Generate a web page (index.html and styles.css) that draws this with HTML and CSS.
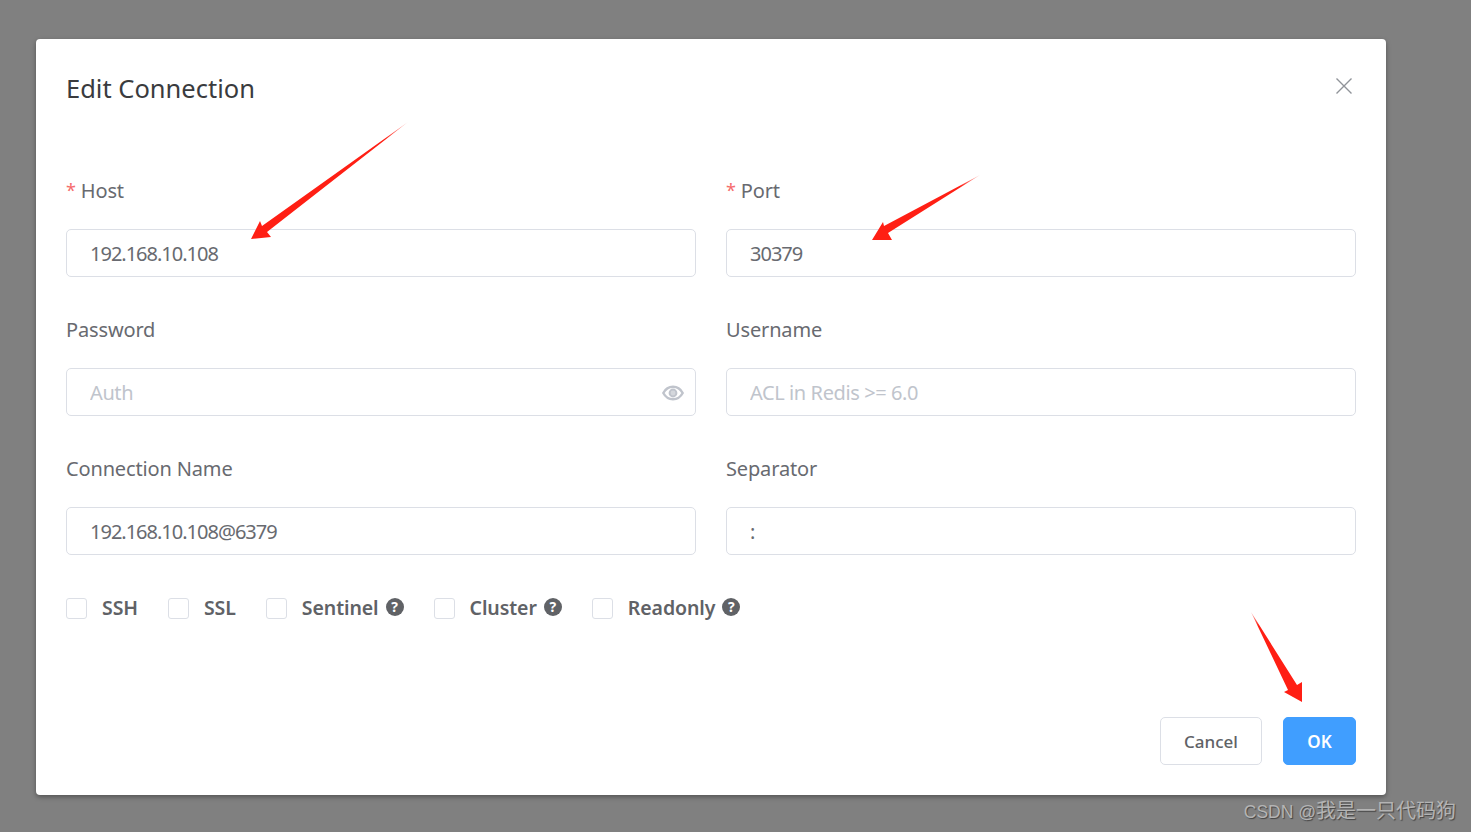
FILE: index.html
```html
<!DOCTYPE html>
<html lang="en">
<head>
<meta charset="utf-8">
<title>Edit Connection</title>
<link rel="stylesheet" href="styles.css">
</head>
<body>
<div class="dialog">
  <header class="dialog-header">
    <h2 class="dialog-title">Edit Connection</h2>
    <button class="close" aria-label="Close">
      <svg width="18" height="18" viewBox="0 0 18 18"><path d="M1.500 1.500L16.500 16.500M16.500 1.500L1.500 16.500" stroke="#909399" stroke-width="1.400" fill="none"/></svg>
    </button>
  </header>
  <form class="form">
    <div class="field">
      <label class="label"><span class="req">*</span>Host</label>
      <input class="input" value="192.168.10.108">
    </div>
    <div class="field">
      <label class="label"><span class="req">*</span>Port</label>
      <input class="input" value="30379">
    </div>
    <div class="field">
      <label class="label">Password</label>
      <div class="input-wrap">
        <input class="input" placeholder="Auth">
        <svg class="eye" width="22" height="16" viewBox="0 0 22 16"><path d="M11 1.800C6.800 1.800 3.200 4.400 1.300 8c1.900 3.600 5.500 6.200 9.700 6.200s7.800-2.600 9.700-6.200C18.800 4.400 15.200 1.800 11 1.800z" fill="none" stroke="#c0c4cc" stroke-width="2.400"/><circle cx="11" cy="8" r="3.400" fill="#d4d7dc" stroke="#c0c4cc" stroke-width="2"/></svg>
      </div>
    </div>
    <div class="field">
      <label class="label">Username</label>
      <input class="input" placeholder="ACL in Redis &gt;= 6.0">
    </div>
    <div class="field">
      <label class="label">Connection Name</label>
      <input class="input" value="192.168.10.108@6379">
    </div>
    <div class="field">
      <label class="label">Separator</label>
      <input class="input" value=":">
    </div>
  </form>
  <div class="checks">
    <label class="check"><span class="box"></span><span class="check-text">SSH</span></label>
    <label class="check"><span class="box"></span><span class="check-text">SSL</span></label>
    <label class="check"><span class="box"></span><span class="check-text">Sentinel</span><span class="help">?</span></label>
    <label class="check"><span class="box"></span><span class="check-text">Cluster</span><span class="help">?</span></label>
    <label class="check"><span class="box"></span><span class="check-text">Readonly</span><span class="help">?</span></label>
  </div>
  <footer class="footer">
    <button class="btn btn-cancel" type="button">Cancel</button>
    <button class="btn btn-ok" type="button">OK</button>
  </footer>
</div>
<svg class="arrows" width="1471" height="832" viewBox="0 0 1471 832">
  <defs>
    <linearGradient id="fadeA" gradientUnits="userSpaceOnUse" x1="408" y1="122" x2="385" y2="139"><stop offset="0" stop-color="#ff1f14" stop-opacity=".3"/><stop offset="1" stop-color="#ff1f14"/></linearGradient>
    <linearGradient id="fadeB" gradientUnits="userSpaceOnUse" x1="980" y1="175" x2="960" y2="187"><stop offset="0" stop-color="#ff1f14" stop-opacity=".3"/><stop offset="1" stop-color="#ff1f14"/></linearGradient>
    <linearGradient id="fadeC" gradientUnits="userSpaceOnUse" x1="1251" y1="612" x2="1258" y2="626"><stop offset="0" stop-color="#ff1f14" stop-opacity=".3"/><stop offset="1" stop-color="#ff1f14"/></linearGradient>
  </defs>
  <polygon fill="url(#fadeA)" points="408,122 262,226 260,221 251,239 271,237 267,232"/>
  <polygon fill="url(#fadeB)" points="980,175 884,226 883,222 872,240 892,240 888,233"/>
  <polygon fill="url(#fadeC)" points="1251,612 1288,690 1284,692 1302,702 1302,682 1297,685"/>
</svg>
<div class="watermark">CSDN @<span class="watermark-cjk">我是一只代码狗</span></div>
</body>
</html>
```
FILE: styles.css
```css
* { box-sizing: border-box; }
html, body { margin: 0; height: 100%; }
body {
  background: #808080;
  font-family: "Noto Sans", "Noto Sans CJK SC", sans-serif;
  color: #606266;
  padding: 39px 0 0 36px;
  overflow: hidden;
}
.dialog {
  width: 1350px;
  height: 756px;
  background: #fff;
  border-radius: 4px;
  box-shadow: 0 2px 5px rgba(0, 0, 0, .35);
  padding: 30px;
  display: flex;
  flex-direction: column;
}
.dialog-header {
  display: flex;
  justify-content: space-between;
  align-items: flex-start;
  height: 100px;
}
.dialog-title {
  margin: 0;
  font-size: 25.500px;
  line-height: 38px;
  font-weight: 400;
  color: #3a3b3e;
}
.close {
  border: 0;
  background: none;
  padding: 0;
  margin: 8px 3px 0 0;
  width: 18px;
  height: 18px;
  line-height: 0;
}
.form {
  display: grid;
  grid-template-columns: 630px 630px;
  column-gap: 30px;
  row-gap: 31px;
}
.field { display: flex; flex-direction: column; }
.label {
  font-size: 20px;
  line-height: 43px;
  height: 60px;
  letter-spacing: -.15px;
  color: #686a70;
}
.req { color: #f56c6c; margin-right: 5px; font-size: 18px; line-height: 0; vertical-align: 1px; }
.input {
  width: 100%;
  height: 48px;
  border: 1px solid #dcdfe6;
  border-radius: 5px;
  padding: 0 23px;
  font: inherit;
  font-size: 20px;
  letter-spacing: -1px;
  color: #686a70;
  background: #fff;
  outline: none;
}
.input::placeholder { color: #c0c4cc; opacity: 1; letter-spacing: -.4px; }
.input-wrap { position: relative; }
.eye { position: absolute; right: 12px; top: 17px; }
.checks {
  display: flex;
  align-items: center;
  gap: 30px;
  margin-top: 32px;
  height: 40px;
}
.check { display: inline-flex; align-items: center; }
.box {
  width: 21px;
  height: 21px;
  border: 1px solid #dcdfe6;
  border-radius: 3px;
  margin-right: 15px;
  margin-top: 3px;
}
.check-text { font-size: 19.500px; font-weight: 600; letter-spacing: -.08px; color: #606266; }
.help {
  width: 18px;
  height: 18px;
  border-radius: 50%;
  background: #606266;
  color: #fff;
  font-size: 14px;
  font-weight: 700;
  line-height: 18px;
  text-align: center;
  margin-left: 7px;
}
.footer {
  margin-top: auto;
  display: flex;
  justify-content: flex-end;
  gap: 21px;
}
.btn {
  height: 48px;
  border-radius: 5px;
  font: inherit;
  font-size: 17px;
  font-weight: 500;
  padding: 0;
}
.btn-cancel { width: 102px; background: #fff; border: 1px solid #dcdfe6; color: #606266; }
.btn-ok { width: 73px; background: #409eff; border: 1px solid #409eff; color: #fff; font-weight: 600; }
.arrows { position: absolute; left: 0; top: 0; pointer-events: none; }
.watermark {
  position: absolute;
  right: 15px;
  bottom: 8px;
  font-family: "Liberation Sans", "Noto Sans CJK SC", sans-serif;
  font-size: 17.500px;
  color: #b4b4b4;
  text-shadow: 1px 1px 1px #444;
}
.watermark-cjk { font-size: 20px; }
```
